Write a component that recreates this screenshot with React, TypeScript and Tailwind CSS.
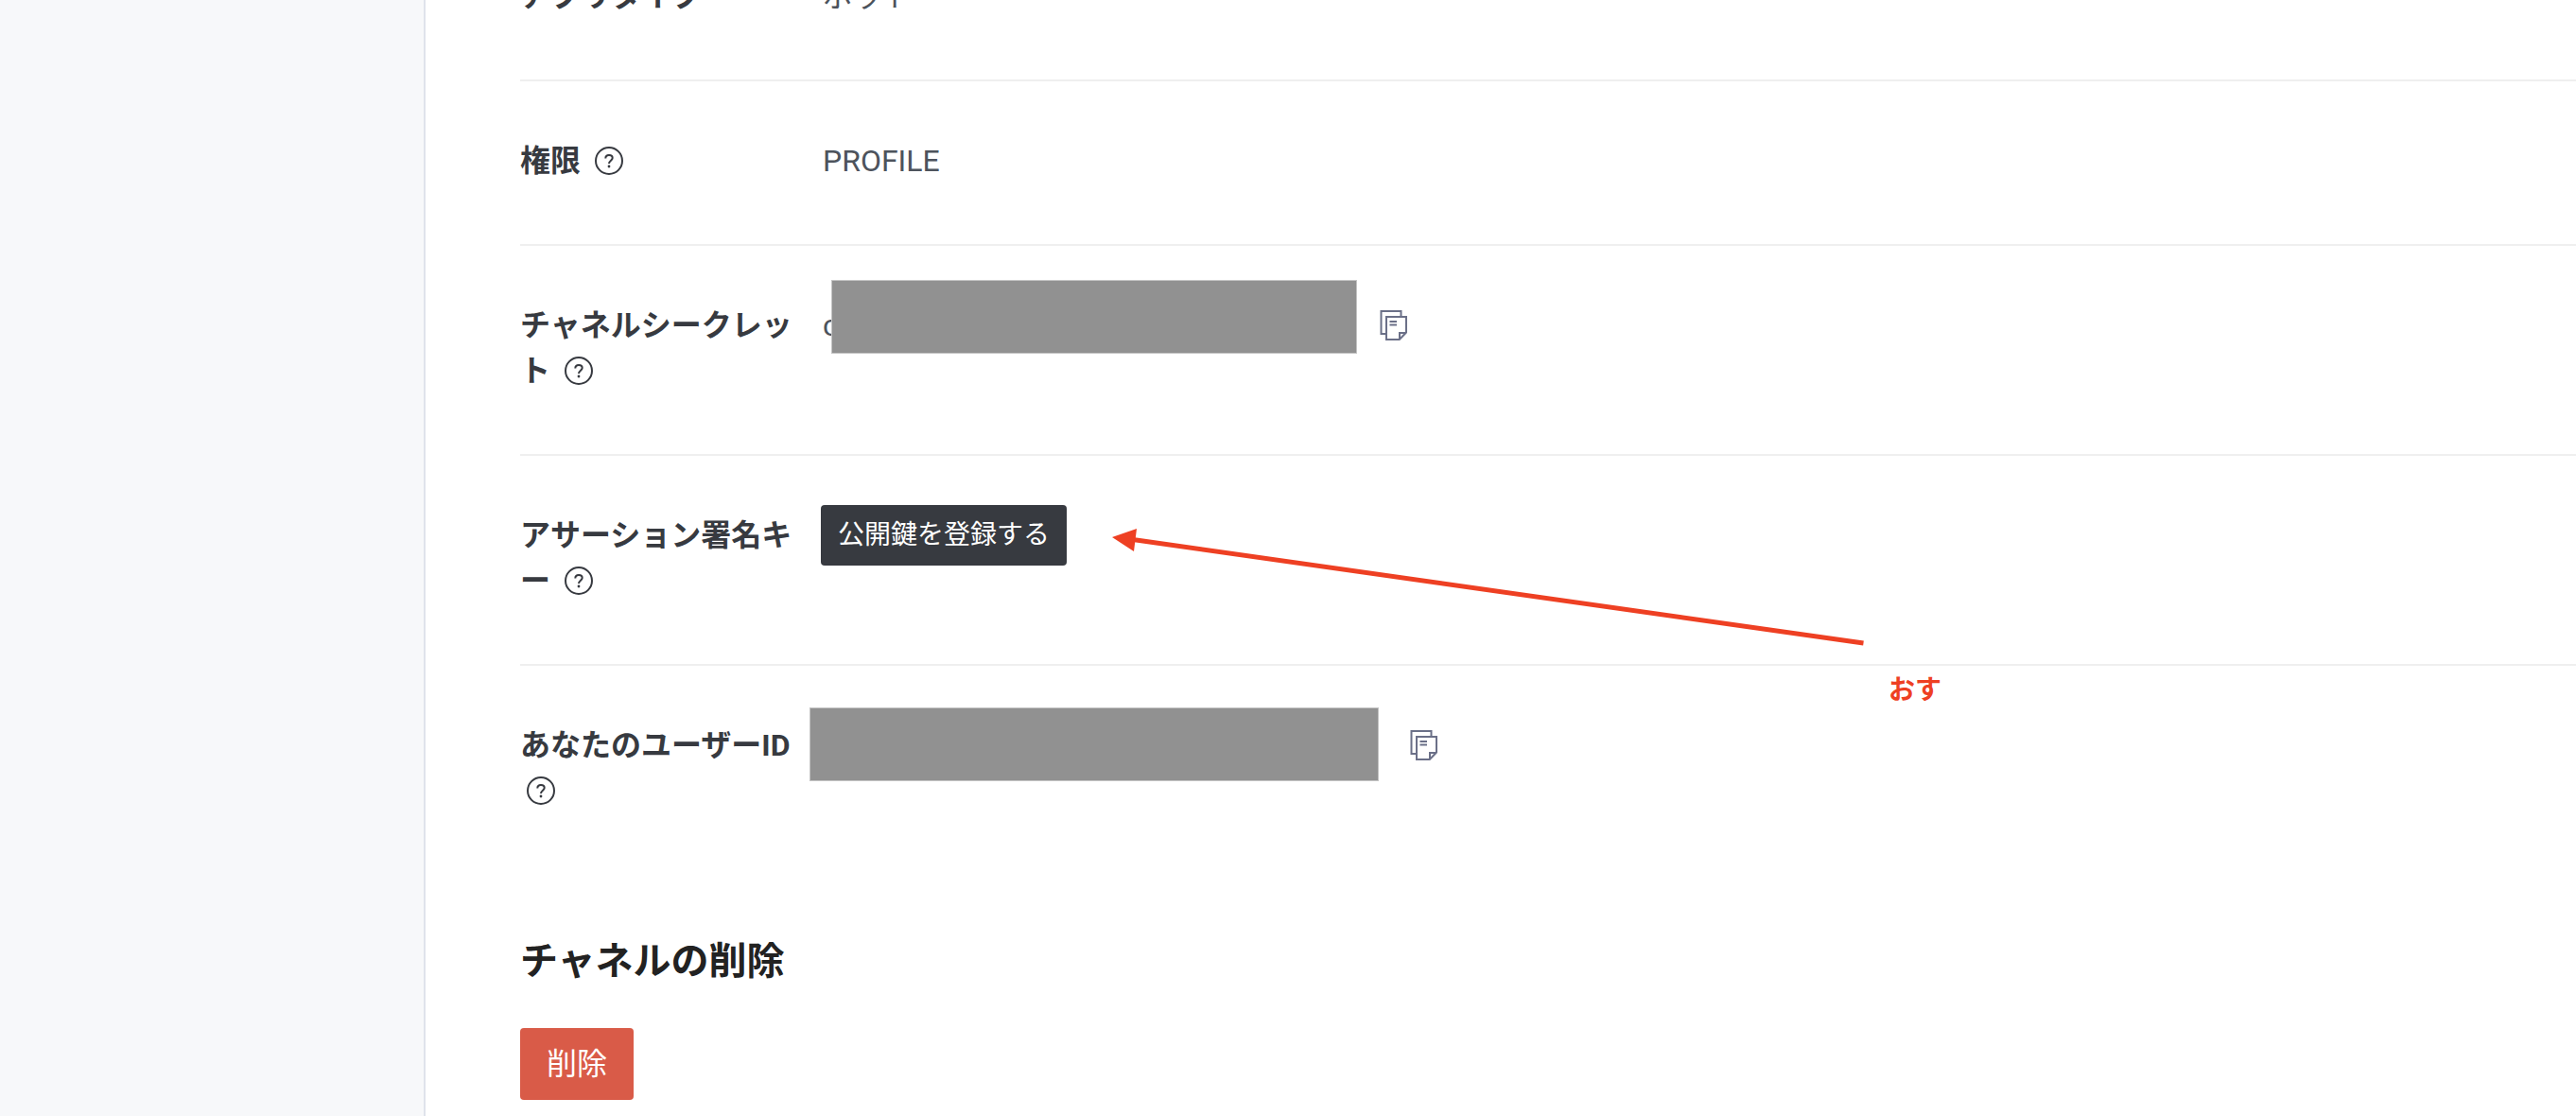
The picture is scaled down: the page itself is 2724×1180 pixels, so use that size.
import type { ReactNode } from 'react';

interface SettingRowProps {
  label: string;
  help?: boolean;
  last?: boolean;
  children: ReactNode;
}

function HelpButton({ label }: { label: string }) {
  return (
    <button type="button" aria-label={`${label}のヘルプ`} className="mb-1.5 ml-[7px] inline-block align-middle">
      <svg className="h-[30px] w-[30px]" viewBox="0 0 30 30" fill="none" stroke="currentColor">
        <circle cx="15" cy="15" r="14" strokeWidth="2" />
        <path d="M11.3 12.4C11.3 10.1 12.8 8.9 15 8.9S18.7 10.1 18.7 12.1C18.7 14.6 15 14.9 15 18" strokeWidth="2" />
        <circle cx="15" cy="21" r="1.4" fill="currentColor" stroke="none" />
      </svg>
    </button>
  );
}

function CopyButton({ label }: { label: string }) {
  return (
    <button type="button" aria-label={label} className="block text-[#6b7088]">
      <svg className="h-8 w-[30px]" viewBox="0 0 30 32" fill="none" stroke="currentColor" strokeWidth="2">
        <path d="M6.5 25H1.5V1H22.5V6.5" />
        <path d="M7 7H28V23.5L20.8 31H7Z" />
        <path d="M21 31V24H28" />
        <path d="M10.5 12H18M10.5 15.5H18" />
      </svg>
    </button>
  );
}

function SettingRow({ label, help, last, children }: SettingRowProps) {
  return (
    <div className={last ? 'flex pt-[60px]' : 'flex border-b-2 border-[#efefef] pt-[60px] pb-16'}>
      <dt className="w-80 shrink-0 pr-5 font-bold text-[#373a40]">
        {label} {help && <HelpButton label={label} />}
      </dt>
      <dd className="relative min-w-0 flex-1 text-[#4d535c]">{children}</dd>
    </div>
  );
}

export default function App() {
  return (
    <div
      lang="ja"
      className="relative flex h-screen overflow-hidden bg-white font-[Roboto,'Noto_Sans_CJK_JP',sans-serif] text-[32px] leading-[48px]"
    >
      <aside className="w-[450px] shrink-0 border-r-2 border-[#dfe3eb] bg-[#f7f8fa]" />

      <main className="min-w-0 flex-1 pl-[100px]">
        <dl className="-mt-[88px]">
          <SettingRow label="アプリタイプ">ボット</SettingRow>

          <SettingRow label="権限" help>
            PROFILE
          </SettingRow>

          <SettingRow label="チャネルシークレット" help>
            <div className="flex h-12 items-center">
              <span className="w-[589px]">c</span>
              <CopyButton label="チャネルシークレットをコピー" />
            </div>
            <span className="absolute -top-6 left-[9px] h-[78px] w-[556px] border border-[#c4c4c4] bg-[#919191]" />
          </SettingRow>

          <SettingRow label="アサーション署名キー" help>
            <button
              type="button"
              className="-mt-2 -ml-0.5 block h-16 rounded bg-[#373a40] px-[18px] text-[28px] text-white"
            >
              公開鍵を登録する
            </button>
          </SettingRow>

          <SettingRow label="あなたのユーザーID" help last>
            <div className="flex h-12 items-center pl-[621px]">
              <CopyButton label="ユーザーIDをコピー" />
            </div>
            <span className="absolute -top-4 -left-3.5 h-[78px] w-[602px] border border-[#c4c4c4] bg-[#919191]" />
          </SettingRow>
        </dl>

        <section className="mt-[127px]">
          <h2 className="text-[40px] leading-[60px] font-bold text-[#222222]">チャネルの削除</h2>
          <button type="button" className="mt-10 block rounded bg-[#d95b48] px-7 py-[14px] text-white">
            削除
          </button>
        </section>
      </main>

      {/* annotation */}
      <div className="pointer-events-none absolute top-[550px] left-[1170px] text-[#ee4023]">
        <svg className="h-[140px] w-[810px]" viewBox="0 0 810 140" fill="currentColor">
          <path d="M6 18L32 9L29 33Z" />
          <path d="M28 20.5L800.5 130" stroke="currentColor" strokeWidth="5" />
        </svg>
        <p className="absolute top-[156px] left-[827px] text-[28px] font-bold whitespace-nowrap">おす</p>
      </div>
    </div>
  );
}
